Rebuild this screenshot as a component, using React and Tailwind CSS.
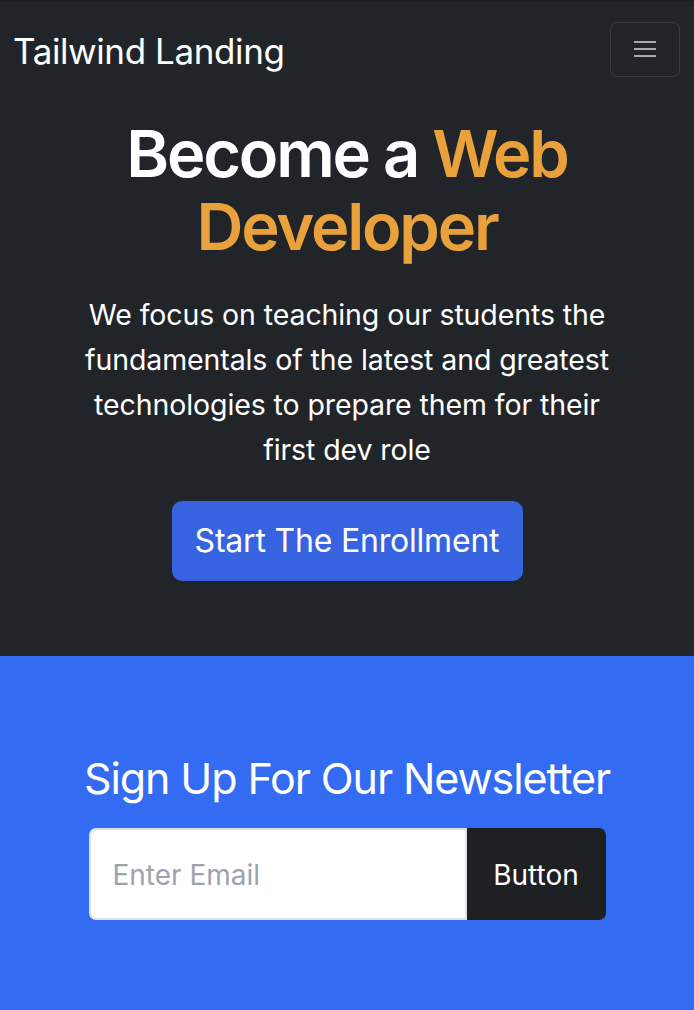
import React from 'react';

function Navbar() {
  return (
    <nav className="flex items-center justify-between pl-[13px] pr-[14px] pt-[17px]">
      <a href="#" className="text-[35px] leading-[55px] pt-[5px] text-white tracking-[-0.4px]">
        Tailwind Landing
      </a>
      <button
        type="button"
        aria-label="Menu"
        className="w-[70px] h-[55px] rounded-[7px] border border-white/10 flex flex-col items-center justify-center gap-[5px]"
      >
        <span className="block w-[22px] h-[2px] bg-[#a9aaab]" />
        <span className="block w-[22px] h-[2px] bg-[#a9aaab]" />
        <span className="block w-[22px] h-[2px] bg-[#a9aaab]" />
      </button>
    </nav>
  );
}

function Hero() {
  return (
    <section className="bg-[#212529] border-t-2 border-[#1b1e21] h-[656px]">
      <Navbar />
      <div className="flex flex-col items-center text-center px-6">
        <h1 className="mt-[38px] text-[65px] leading-[73px] font-semibold text-white tracking-[-2.2px]">
          Become a <span className="text-[#e9a23b]">Web</span>
          <br />
          <span className="text-[#e9a23b]">Developer</span>
        </h1>
        <p className="mt-[29px] max-w-[540px] text-[28.5px] leading-[45px] text-white tracking-[-0.1px]">
          We focus on teaching our students the fundamentals of the latest and greatest
          technologies to prepare them for their first dev role
        </p>
        <button
          type="button"
          className="mt-[29px] w-[351px] h-[80px] rounded-[10px] bg-[#3763e0] text-white text-[32px] tracking-[-0.2px]"
        >
          Start The Enrollment
        </button>
      </div>
    </section>
  );
}

function Newsletter() {
  return (
    <section className="bg-[#336cf2] h-[354px] flex flex-col items-center">
      <h2 className="mt-[96px] text-[43px] leading-[52px] text-white tracking-[-1.1px]">
        Sign Up For Our Newsletter
      </h2>
      <div className="mt-[24px] flex w-[517px] h-[92px]">
        <input
          type="email"
          placeholder="Enter Email"
          className="flex-1 min-w-0 bg-white rounded-l-[7px] border-2 border-[#dee2e6] px-[22px] pt-[2px] text-[28px] text-gray-800 placeholder:text-[#9ca3af] outline-none"
        />
        <button
          type="button"
          className="w-[139px] rounded-r-[7px] bg-[#1f2024] text-white text-[28px] pt-[2px]"
        >
          Button
        </button>
      </div>
    </section>
  );
}

export default function App() {
  return (
    <div className="w-full min-h-[1010px] bg-[#336cf2]" style={{ fontFamily: 'Inter, "Noto Sans", sans-serif' }}>
      <Hero />
      <Newsletter />
    </div>
  );
}
